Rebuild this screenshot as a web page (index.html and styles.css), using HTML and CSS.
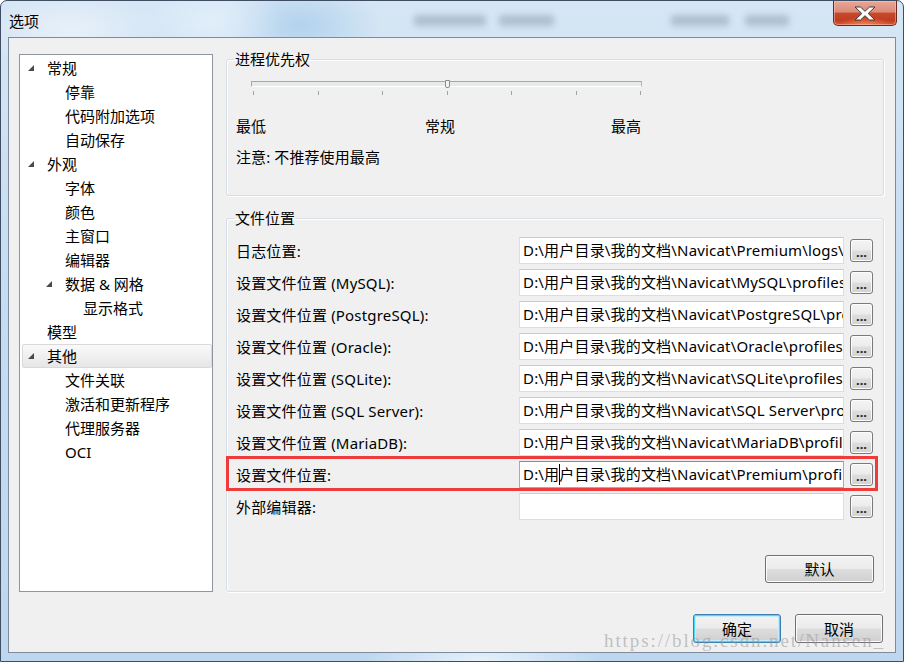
FILE: index.html
```html
<!DOCTYPE html>
<html lang="zh-CN">
<head>
<meta charset="utf-8">
<title>选项</title>
<link rel="stylesheet" href="styles.css">
</head>
<body>
<div class="window">
  <div class="titlebar">
    <span class="title">选项</span>
    <div class="ghosts">
      <i class="g g1"></i><i class="g g2"></i><i class="g g3"></i><i class="g g4"></i>
    </div>
    <button class="close" aria-label="关闭">
      <svg width="22" height="15" viewBox="-1 -1 22 15"><polygon points="0,0 5.5,0 10,4.3 14.5,0 20,0 13.2,6.5 20,13 14.5,13 10,8.7 5.5,13 0,13 6.8,6.5" fill="#fff" stroke="#3b3b3b" stroke-width="1" stroke-linejoin="round"/></svg>
    </button>
  </div>
  <div class="client">
    <div class="main">
      <ul class="tree">
        <li class="l0"><span class="tw"><svg width="6" height="6" viewBox="0 0 6 6"><polygon points="6,0 6,6 0,6" fill="#4a4a4a"/></svg></span>常规</li>
        <li class="l1"><span class="tw"></span>停靠</li>
        <li class="l1"><span class="tw"></span>代码附加选项</li>
        <li class="l1"><span class="tw"></span>自动保存</li>
        <li class="l0"><span class="tw"><svg width="6" height="6" viewBox="0 0 6 6"><polygon points="6,0 6,6 0,6" fill="#4a4a4a"/></svg></span>外观</li>
        <li class="l1"><span class="tw"></span>字体</li>
        <li class="l1"><span class="tw"></span>颜色</li>
        <li class="l1"><span class="tw"></span>主窗口</li>
        <li class="l1"><span class="tw"></span>编辑器</li>
        <li class="l1"><span class="tw"><svg width="6" height="6" viewBox="0 0 6 6"><polygon points="6,0 6,6 0,6" fill="#4a4a4a"/></svg></span>数据 &amp; 网格</li>
        <li class="l2"><span class="tw"></span>显示格式</li>
        <li class="l0"><span class="tw"></span>模型</li>
        <li class="l0 sel"><span class="tw"><svg width="6" height="6" viewBox="0 0 6 6"><polygon points="6,0 6,6 0,6" fill="#4a4a4a"/></svg></span>其他</li>
        <li class="l1"><span class="tw"></span>文件关联</li>
        <li class="l1"><span class="tw"></span>激活和更新程序</li>
        <li class="l1"><span class="tw"></span>代理服务器</li>
        <li class="l1"><span class="tw"></span>OCI</li>
      </ul>
      <div class="panel">
        <fieldset class="group prio">
          <legend>进程优先权</legend>
          <div class="slider">
            <div class="track"><span class="thumb"></span></div>
            <div class="ticks"><i></i><i></i><i></i><i></i><i></i><i></i><i></i></div>
          </div>
          <div class="levels"><span>最低</span><span>常规</span><span>最高</span></div>
          <p class="note">注意: 不推荐使用最高</p>
        </fieldset>
        <fieldset class="group files">
          <legend>文件位置</legend>
          <div class="rows">
            <div class="row"><span class="lbl">日志位置:</span><div class="field">D:\用户目录\我的文档\Navicat\Premium\logs\</div><button class="dots">...</button></div>
            <div class="row"><span class="lbl">设置文件位置 (MySQL):</span><div class="field">D:\用户目录\我的文档\Navicat\MySQL\profiles</div><button class="dots">...</button></div>
            <div class="row"><span class="lbl">设置文件位置 (PostgreSQL):</span><div class="field">D:\用户目录\我的文档\Navicat\PostgreSQL\profiles</div><button class="dots">...</button></div>
            <div class="row"><span class="lbl">设置文件位置 (Oracle):</span><div class="field">D:\用户目录\我的文档\Navicat\Oracle\profiles</div><button class="dots">...</button></div>
            <div class="row"><span class="lbl">设置文件位置 (SQLite):</span><div class="field">D:\用户目录\我的文档\Navicat\SQLite\profiles</div><button class="dots">...</button></div>
            <div class="row"><span class="lbl">设置文件位置 (SQL Server):</span><div class="field">D:\用户目录\我的文档\Navicat\SQL Server\profiles</div><button class="dots">...</button></div>
            <div class="row"><span class="lbl">设置文件位置 (MariaDB):</span><div class="field">D:\用户目录\我的文档\Navicat\MariaDB\profiles</div><button class="dots">...</button></div>
            <div class="row marked"><span class="lbl">设置文件位置:</span><div class="field focus">D:\用<span class="caret"></span>户目录\我的文档\Navicat\Premium\profiles</div><button class="dots">...</button><span class="redbox"></span></div>
            <div class="row"><span class="lbl">外部编辑器:</span><div class="field"></div><button class="dots">...</button></div>
          </div>
          <div class="foot"><button class="btn">默认</button></div>
        </fieldset>
      </div>
    </div>
    <div class="actions">
      <button class="btn default">确定</button>
      <button class="btn">取消</button>
    </div>
  </div>
  <div class="watermark">https://blog.csdn.net/Nansen_</div>
</div>
</body>
</html>
```
FILE: styles.css
```css
* { box-sizing: border-box; }
html, body { margin: 0; padding: 0; }
body {
  width: 904px;
  height: 662px;
  overflow: hidden;
  font-family: "Noto Sans", "Noto Sans CJK SC", sans-serif;
  font-size: 15px;
  color: #000;
  background: #fff;
}
.window {
  position: relative;
  width: 904px;
  height: 662px;
  display: flex;
  flex-direction: column;
  padding: 0 7px 8px;
  border: 1px solid #3f4e62;
  border-radius: 7px 7px 0 0;
  background:
    radial-gradient(ellipse 90px 40px at 70px 30px, rgba(255,255,255,.45), transparent),
    radial-gradient(ellipse 70px 40px at 210px 20px, rgba(230,242,252,.7), transparent),
    radial-gradient(ellipse 80px 45px at 300px 24px, rgba(150,195,230,.55), transparent),
    radial-gradient(ellipse 120px 30px at 480px 660px, rgba(240,248,255,.8), transparent),
    linear-gradient(180deg, #d6e6f5 0%, #c6dcf1 45%, #bed7ee 100%);
}
.titlebar {
  height: 36px;
  display: flex;
  align-items: flex-start;
  position: relative;
}
.title {
  margin: 11px 0 0 1px;
  font-size: 15px;
  line-height: 18px;
  color: #000;
}
.ghosts { flex: 1; position: relative; height: 36px; }
.g {
  position: absolute;
  top: 14px;
  height: 11px;
  background: rgba(80,95,120,.28);
  filter: blur(3px);
  border-radius: 3px;
}
.g1 { left: 375px; width: 72px; }
.g2 { left: 460px; width: 55px; }
.g3 { left: 632px; width: 58px; }
.g4 { left: 706px; width: 44px; }
.close {
  width: 64px;
  height: 25px;
  margin-right: -1px;
  padding: 0;
  border: 1px solid #6b2a1d;
  border-top: none;
  border-radius: 0 0 5px 5px;
  background:
    radial-gradient(ellipse 26px 8px at 50% 100%, rgba(255,140,90,.8), transparent),
    linear-gradient(180deg, #e9a797 0%, #dc8b78 45%, #c7482c 52%, #c13d22 80%, #d05a3a 100%);
  box-shadow: inset 0 0 0 1px rgba(255,210,200,.45);
  display: flex;
  align-items: center;
  justify-content: center;
}
.client {
  flex: 1;
  display: flex;
  flex-direction: column;
  border: 1px solid #7d8b9d;
  background: #f0f0f0;
  padding: 12px 11px 9px 10px;
}
.main {
  display: flex;
  gap: 13px;
  height: 542px;
}
.tree {
  list-style: none;
  margin: 4px 0 0;
  padding: 1px 0 0;
  width: 194px;
  height: 538px;
  border: 1px solid #8f959c;
  background: #fff;
}
.tree li {
  display: flex;
  align-items: center;
  height: 24px;
  line-height: 24px;
  margin-left: 2px;
  white-space: nowrap;
}
.tree .tw {
  width: 19px;
  display: flex;
  align-items: center;
  padding-bottom: 1px;
}
.tree .l0 { padding-left: 6px; }
.tree .l1 { padding-left: 24px; }
.tree .l2 { padding-left: 42px; }
.tree .sel {
  padding-left: 5px;
  border: 1px solid #d9d9d9;
  border-radius: 2px;
  background: linear-gradient(180deg, #fafafa, #e6e6e6);
}
.panel {
  width: 658px;
  display: flex;
  flex-direction: column;
  gap: 13px;
}
.group {
  margin: 0;
  padding: 0 10px 0 9px;
  border: 1px solid #d5dfe5;
  border-radius: 3px;
  box-shadow: inset 1px 1px 0 #fff, 1px 1px 0 #fff;
  min-width: 0;
}
.group legend {
  padding: 0 1px;
  line-height: 18px;
  font-size: 15px;
  margin-left: -2px;
}
.prio { padding-bottom: 29px; }
.slider { margin: 13px 0 0 15px; width: 391px; }
.track {
  position: relative;
  height: 6px;
  border: 1px solid #a7a7a7;
  border-bottom-color: #fff;
  border-right-color: #b4b4b4;
  background: #e7eaea;
}
.thumb {
  position: absolute;
  left: 193px;
  top: -2px;
  width: 5px;
  height: 8px;
  background: #f3f3f3;
  border: 1px solid #8c8c8c;
  border-radius: 0 0 2px 2px;
}
.ticks {
  display: flex;
  justify-content: space-between;
  margin-top: 4px;
  padding: 0 1px 0 2px;
}
.ticks i { display: block; width: 1px; height: 4px; background: #a3a3a3; }
.levels {
  margin-top: 22px;
  width: 405px;
  display: flex;
  justify-content: space-between;
  line-height: 18px;
}
.levels span:nth-child(2) { margin-left: 3px; }
.note { margin: 13px 0 0; line-height: 18px; letter-spacing: 0.1px; }
.files {
  flex: 1;
  display: flex;
  flex-direction: column;
  padding-bottom: 8px;
}
.rows { display: flex; flex-direction: column; gap: 5px; margin-top: 10px; }
.row {
  position: relative;
  display: flex;
  align-items: center;
  height: 27px;
}
.lbl { width: 283px; line-height: 18px; white-space: nowrap; letter-spacing: 0.18px; }
.field {
  width: 325px;
  height: 27px;
  border: 1px solid #dadde2;
  border-top-color: #c9ccd1;
  background: #fff;
  padding: 0 3px;
  line-height: 25px;
  white-space: nowrap;
  overflow: hidden;
  letter-spacing: 0.18px;
}
.field.focus {
  border-color: #7fb4e6;
  border-top-color: #5a97d0;
}
.caret {
  display: inline-block;
  width: 1px;
  height: 21px;
  background: #000;
  vertical-align: middle;
  margin: -3px -1px 0 0;
}
.dots {
  width: 23px;
  height: 23px;
  margin-left: 6px;
  padding: 0 0 2px;
  font: bold 13px/14px "Noto Sans", sans-serif;
  color: #222;
  border: 1px solid #7a7a7a;
  border-radius: 3px;
  background: linear-gradient(180deg, #f4f4f4 0%, #ececec 48%, #dedede 52%, #d2d2d2 100%);
  box-shadow: inset 0 0 0 1px #fbfbfb;
  display: flex;
  align-items: flex-end;
  justify-content: center;
}
.redbox {
  position: absolute;
  left: -10px;
  right: -5px;
  top: -5px;
  bottom: -3px;
  border: 3px solid #ee3b3b;
  pointer-events: none;
}
.foot {
  margin-top: auto;
  display: flex;
  justify-content: flex-end;
  margin-right: -1px;
}
.btn {
  height: 28px;
  padding: 0;
  font: 15px/18px "Noto Sans", "Noto Sans CJK SC", sans-serif;
  color: #000;
  border: 1px solid #707070;
  border-radius: 3px;
  background: linear-gradient(180deg, #f3f3f3 0%, #ebebeb 48%, #dddddd 52%, #cfcfcf 100%);
  box-shadow: inset 0 0 0 1px #fcfcfc;
}
.foot .btn { width: 109px; }
.actions {
  margin-top: 22px;
  display: flex;
  justify-content: flex-end;
  gap: 14px;
  padding-right: 1px;
}
.actions .btn { width: 88px; height: 29px; }
.actions .default {
  border-color: #3c7fb1;
  box-shadow: inset 0 0 0 1px #48d8fb, inset 0 0 0 2px #c4ecfb;
}
.watermark {
  position: absolute;
  left: 603px;
  top: 629px;
  font-family: "Liberation Serif", serif;
  font-size: 19px;
  letter-spacing: 1.9px;
  color: rgba(150,150,150,.55);
  white-space: nowrap;
  pointer-events: none;
}
```
